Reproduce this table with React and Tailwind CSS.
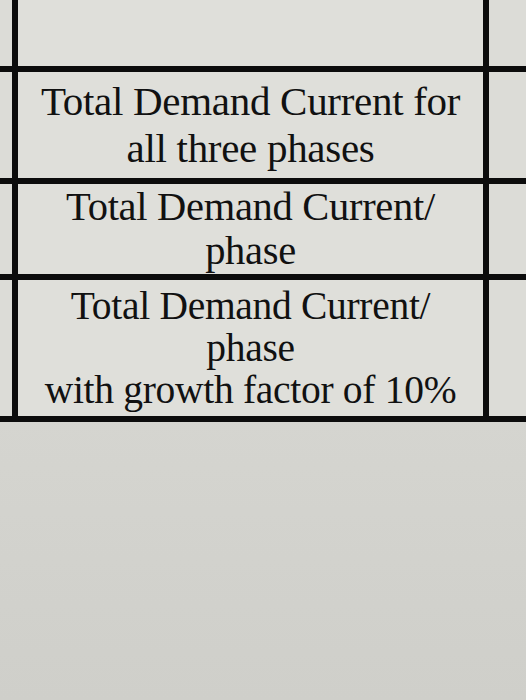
export default function App() {
  const rows = [
    { h: 'h-[66px]', t: 'text-[40px] leading-[44px]', lines: [] },
    { h: 'h-[106px]', t: 'text-[41px] leading-[47px]', lines: ['Total Demand Current for', 'all three phases'] },
    { h: 'h-[90px]', t: 'text-[40.5px] leading-[44px]', lines: ['Total Demand Current/', 'phase'] },
    { h: 'h-[136px]', t: 'text-[39.5px] leading-[42px]', lines: ['Total Demand Current/', 'phase', 'with growth factor of 10%'] },
  ];

  return (
    <div className="w-[526px] h-[700px] overflow-hidden bg-gradient-to-b from-[#deded9] to-[#cfcfca] font-['Liberation_Serif',serif] text-[#111]">
      <div className="grid grid-cols-[12px_465px_1fr] gap-[6px] bg-[#0c0c0c] border-b-[6px] border-[#0c0c0c]">
        {rows.map((row, i) => (
          <div key={i} className="contents">
            <div className={`${row.h} bg-[#dcdcd7]`} />
            <div className={`${row.h} ${row.t} bg-[#dfdfda] flex flex-col items-center justify-center text-center tracking-[-0.3px]`}>
              {row.lines.map((t) => (
                <div key={t}>{t}</div>
              ))}
            </div>
            <div className={`${row.h} bg-[#dcdcd7]`} />
          </div>
        ))}
      </div>
    </div>
  );
}
